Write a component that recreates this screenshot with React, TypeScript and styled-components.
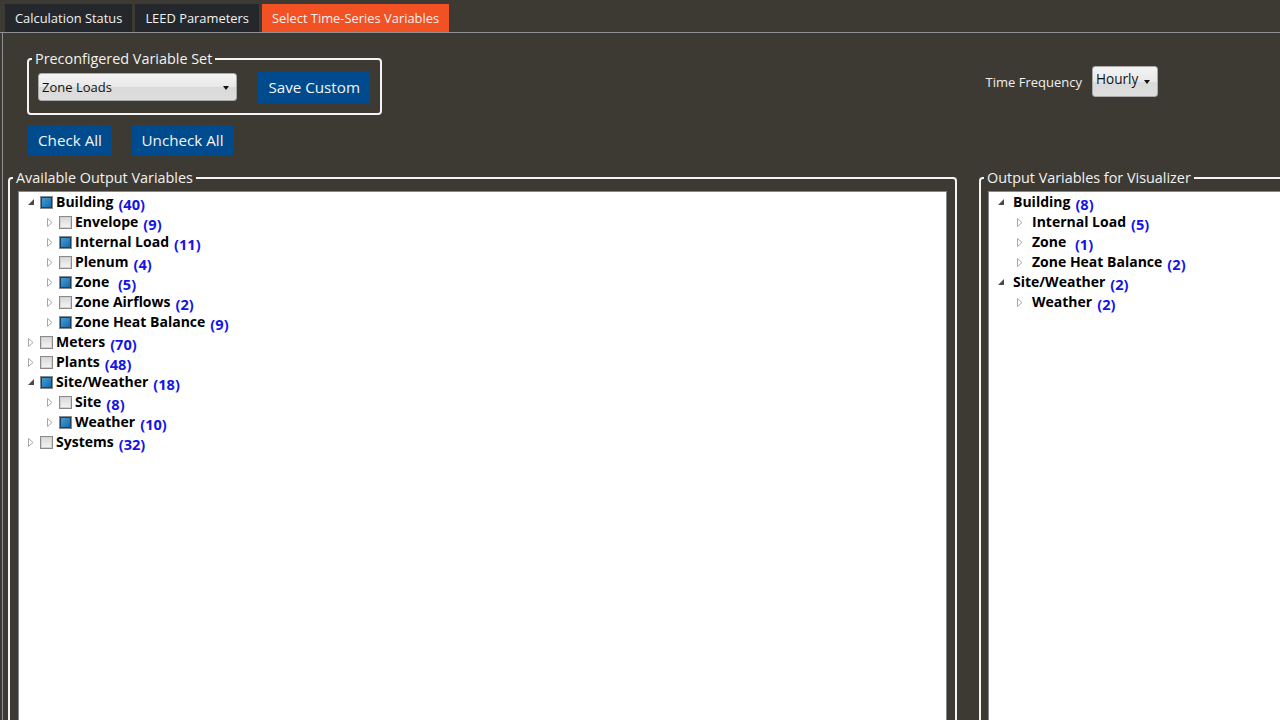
import React from "react";
import styled, { createGlobalStyle } from "styled-components";

const GlobalStyle = createGlobalStyle`
  html, body { margin: 0; padding: 0; background: #3d3a33; }
  body { font-family: "Open Sans", "Noto Sans", sans-serif; }
  * { box-sizing: border-box; }
`;

const Root = styled.div`
  width: 1280px;
  height: 720px;
  overflow: hidden;
  background: #3d3a33;
  display: flex;
  flex-direction: column;
`;

const TabBar = styled.div`
  display: flex;
  gap: 3px;
  padding: 4px 0 0 5px;
  height: 33px;
  border-bottom: 1px solid #8f9196;
`;

const Tab = styled.div<{ $active?: boolean }>`
  height: 28px;
  padding: 0 10px;
  display: flex;
  align-items: center;
  font-size: 12.9px;
  color: #f2f2f2;
  background: ${(p) => (p.$active ? "#f25124" : "#24282c")};
  white-space: nowrap;
`;

const Content = styled.div`
  flex: 1;
  margin-left: 2px;
  border-left: 1px solid #8f9196;
  display: flex;
  flex-direction: column;
  min-height: 0;
`;

const TopArea = styled.div`
  display: flex;
  justify-content: space-between;
  align-items: flex-start;
  padding: 17px 122px 0 24px;
`;

const LeftCol = styled.div`
  display: flex;
  flex-direction: column;
  gap: 10px;
`;

const Group = styled.fieldset<{ $pl: number }>`
  margin: 0;
  border: 2px solid #f4f4f4;
  border-radius: 4px;
  padding: 0 8px 0 ${(p) => p.$pl}px;
  min-width: 0;
`;

const Legend = styled.legend<{ $shift: number }>`
  font-size: 14.4px;
  line-height: 18px;
  color: #f2f2f2;
  padding: 0 3px;
  margin-left: ${(p) => p.$shift}px;
  white-space: nowrap;
`;

const PresetGroup = styled(Group)`
  width: 355px;
  padding-right: 10px;
`;

const PresetRow = styled.div`
  display: flex;
  align-items: center;
  gap: 21px;
  padding: 3px 0 10px;
`;

const Combo = styled.div<{ $w: number; $h: number }>`
  width: ${(p) => p.$w}px;
  height: ${(p) => p.$h}px;
  border: 1px solid #a9a9a9;
  border-radius: 3px;
  background: linear-gradient(#f4f4f4, #e8e8e8 50%, #d9d9d9 51%, #dedede);
  display: flex;
  align-items: center;
  justify-content: space-between;
  padding: 0 7px 0 3px;
  font-size: 13px;
  color: #111;
`;

const HourCombo = styled(Combo)`
  align-items: flex-start;
  padding-top: 2px;
  font-size: 13.6px;
`;

const Arrow = styled.span<{ $mt?: number }>`
  width: 0;
  height: 0;
  border-left: 3.5px solid transparent;
  border-right: 3.5px solid transparent;
  border-top: 4px solid #111;
  margin-top: ${(p) => p.$mt ?? 2}px;
`;

const BlueButton = styled.div<{ $w: number; $h: number }>`
  width: ${(p) => p.$w}px;
  height: ${(p) => p.$h}px;
  background: #004b8d;
  color: #f4f4f4;
  font-size: 15.2px;
  display: flex;
  align-items: center;
  justify-content: center;
  white-space: nowrap;
`;

const ButtonRow = styled.div`
  display: flex;
  gap: 20px;
  padding-left: 1px;
`;

const TimeFreq = styled.div`
  display: flex;
  align-items: center;
  gap: 10px;
  margin-top: 16px;
  font-size: 13px;
  color: #f0f0f0;
`;

const Panels = styled.div`
  display: flex;
  gap: 22px;
  padding-left: 5px;
  margin-top: 14px;
  flex: 1;
  min-height: 0;
`;

const LeftPanel = styled(Group)`
  width: 949px;
  flex: none;
  height: 600px;
  padding-bottom: 0;
`;

const RightPanel = styled(Group)`
  width: 330px;
  flex: none;
  height: 600px;
  padding-bottom: 0;
`;

const TreeBox = styled.div`
  margin-top: 4px;
  background: #ffffff;
  border: 1px solid #828790;
  height: 560px;
`;

const Row = styled.div<{ $level: number }>`
  height: 20px;
  display: flex;
  align-items: center;
  padding-left: ${(p) => 7 + p.$level * 19}px;
  white-space: pre;
`;

const Expander = styled.span`
  width: 14px;
  height: 20px;
  display: flex;
  align-items: center;
  justify-content: flex-start;
  padding-left: 2px;
`;

const Check = styled.span<{ $on: boolean }>`
  width: 13px;
  height: 13px;
  border: 1px solid #8a8a8a;
  background: linear-gradient(#e6e6e6, #f8f8f8);
  display: flex;
  align-items: center;
  justify-content: center;
  margin-right: 3px;
  flex: none;
  &::after {
    content: "";
    width: 9px;
    height: 9px;
    border: 1px solid ${(p) => (p.$on ? "#1c3f63" : "#d2d2d2")};
    background: ${(p) =>
      p.$on ? "linear-gradient(135deg, #3e9edc, #1a6aa8)" : "linear-gradient(#dadada, #f2f2f2)"};
  }
`;

const Label = styled.span<{ $indent: boolean }>`
  font-weight: 700;
  font-size: 14px;
  color: #000;
  line-height: 20px;
  margin-left: ${(p) => (p.$indent ? 3 : 0)}px;
`;

const Count = styled.span`
  font-weight: 700;
  font-size: 14.6px;
  color: #1414e6;
  margin-left: 5px;
  line-height: 20px;
  position: relative;
  top: 2px;
`;

const ExpandedIcon = () => (
  <svg width="6" height="6" viewBox="0 0 6 6">
    <polygon points="6,0 6,6 0,6" fill="#4a4a4a" />
  </svg>
);

const CollapsedIcon = () => (
  <svg width="6" height="9" viewBox="0 0 6 9">
    <path d="M0.5,0.5 L5,4.5 L0.5,8.5 Z" fill="#ffffff" stroke="#a8a8a8" strokeWidth="1" />
  </svg>
);

type Node = { level: number; name: string; count: number; expanded: boolean; checked?: boolean };

const leftTree: Node[] = [
  { level: 0, name: "Building", count: 40, expanded: true, checked: true },
  { level: 1, name: "Envelope", count: 9, expanded: false, checked: false },
  { level: 1, name: "Internal Load", count: 11, expanded: false, checked: true },
  { level: 1, name: "Plenum", count: 4, expanded: false, checked: false },
  { level: 1, name: "Zone ", count: 5, expanded: false, checked: true },
  { level: 1, name: "Zone Airflows", count: 2, expanded: false, checked: false },
  { level: 1, name: "Zone Heat Balance", count: 9, expanded: false, checked: true },
  { level: 0, name: "Meters", count: 70, expanded: false, checked: false },
  { level: 0, name: "Plants", count: 48, expanded: false, checked: false },
  { level: 0, name: "Site/Weather", count: 18, expanded: true, checked: true },
  { level: 1, name: "Site", count: 8, expanded: false, checked: false },
  { level: 1, name: "Weather", count: 10, expanded: false, checked: true },
  { level: 0, name: "Systems", count: 32, expanded: false, checked: false },
];

const rightTree: Node[] = [
  { level: 0, name: "Building", count: 8, expanded: true },
  { level: 1, name: "Internal Load", count: 5, expanded: false },
  { level: 1, name: "Zone ", count: 1, expanded: false },
  { level: 1, name: "Zone Heat Balance", count: 2, expanded: false },
  { level: 0, name: "Site/Weather", count: 2, expanded: true },
  { level: 1, name: "Weather", count: 2, expanded: false },
];

const Tree = ({ nodes }: { nodes: Node[] }) => (
  <TreeBox>
    {nodes.map((n, i) => (
      <Row key={i} $level={n.level}>
        <Expander>{n.expanded ? <ExpandedIcon /> : <CollapsedIcon />}</Expander>
        {n.checked !== undefined && <Check $on={n.checked} />}
        <Label $indent={n.checked === undefined}>{n.name}</Label>
        <Count>({n.count})</Count>
      </Row>
    ))}
  </TreeBox>
);

export default function App() {
  return (
    <Root>
      <GlobalStyle />
      <TabBar>
        <Tab>Calculation Status</Tab>
        <Tab>LEED Parameters</Tab>
        <Tab $active>Select Time-Series Variables</Tab>
      </TabBar>
      <Content>
        <TopArea>
          <LeftCol>
            <PresetGroup $pl={9}>
              <Legend $shift={-6}>Preconfigered Variable Set</Legend>
              <PresetRow>
                <Combo $w={200} $h={28}>
                  <span>Zone Loads</span>
                  <Arrow />
                </Combo>
                <BlueButton $w={112} $h={32}>Save Custom</BlueButton>
              </PresetRow>
            </PresetGroup>
            <ButtonRow>
              <BlueButton $w={84} $h={30}>Check All</BlueButton>
              <BlueButton $w={101} $h={30}>Uncheck All</BlueButton>
            </ButtonRow>
          </LeftCol>
          <TimeFreq>
            <span>Time Frequency</span>
            <HourCombo $w={66} $h={31}>
              <span>Hourly</span>
              <Arrow $mt={11} />
            </HourCombo>
          </TimeFreq>
        </TopArea>
        <Panels>
          <LeftPanel $pl={8}>
            <Legend $shift={-5}>Available Output Variables</Legend>
            <Tree nodes={leftTree} />
          </LeftPanel>
          <RightPanel $pl={7}>
            <Legend $shift={-4}>Output Variables for Visualizer</Legend>
            <Tree nodes={rightTree} />
          </RightPanel>
        </Panels>
      </Content>
    </Root>
  );
}
